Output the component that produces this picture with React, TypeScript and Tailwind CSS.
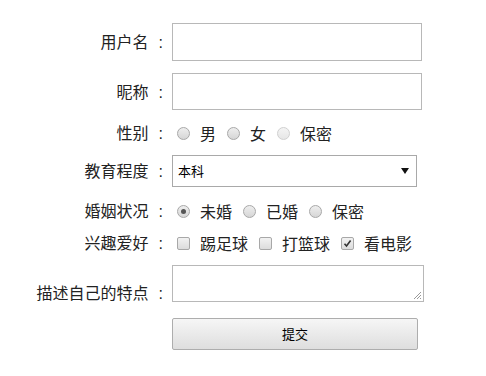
import React from "react";

const font = { fontFamily: '"Microsoft YaHei", "Noto Sans CJK SC", "Noto Sans", sans-serif' };

function Label({ text, className = "" }: { text: string; className?: string }) {
  return (
    <div className={"w-[163px] shrink-0 text-right text-[16px] leading-[22px] text-[#222] whitespace-nowrap " + className}>
      {text}
      <span className="ml-[10px]" style={{ fontFamily: '"Liberation Sans", sans-serif' }}>:</span>
    </div>
  );
}

function Radio({ checked = false, light = false }: { checked?: boolean; light?: boolean }) {
  return (
    <span
      className={
        "relative inline-flex h-[13px] w-[13px] shrink-0 items-center justify-center rounded-full border " +
        (light
          ? "border-[#d0d0d0] bg-gradient-to-b from-[#f4f4f4] to-[#e6e6e6]"
          : "border-[#a8a8a8] bg-gradient-to-b from-[#eeeeee] to-[#d6d6d6]")
      }
    >
      {checked && <span className="h-[5px] w-[5px] rounded-full bg-[#555]" />}
    </span>
  );
}

function Check({ checked = false }: { checked?: boolean }) {
  return (
    <span className="inline-flex h-[13px] w-[13px] shrink-0 items-center justify-center rounded-[2px] border border-[#a8a8a8] bg-gradient-to-b from-[#f2f2f2] to-[#dcdcdc]">
      {checked && (
        <svg width="9" height="9" viewBox="0 0 9 9">
          <path d="M1.5 4.8 L3.5 7 L7.6 1.6" fill="none" stroke="#333" strokeWidth="1.6" />
        </svg>
      )}
    </span>
  );
}

function Option({ control, text, first = false }: { control: React.ReactNode; text: string; first?: boolean }) {
  return (
    <div className={"flex items-center " + (first ? "ml-[5px]" : "ml-[11px]")}>
      {control}
      <span className="ml-[10px] text-[16px] leading-[22px] text-[#222]">{text}</span>
    </div>
  );
}

export default function App() {
  return (
    <div className="h-[376px] w-[486px] bg-white pt-[23px]" style={font}>
      <div className="flex items-center">
        <Label text="用户名" />
        <div className="ml-[9px] h-[38px] w-[250px] border border-[#b8b8b8] bg-white" />
      </div>
      <div className="mt-[12px] flex items-center">
        <Label text="昵称" />
        <div className="ml-[9px] h-[37px] w-[250px] border border-[#b8b8b8] bg-white" />
      </div>
      <div className="mt-[11px] flex h-[24px] items-center">
        <Label text="性别" />
        <div className="ml-[9px] flex items-center">
          <Option first control={<Radio />} text="男" />
          <Option control={<Radio />} text="女" />
          <Option control={<Radio light />} text="保密" />
        </div>
      </div>
      <div className="mt-[10px] flex items-center">
        <Label text="教育程度" />
        <div className="ml-[9px] flex h-[32px] w-[245px] items-center justify-between border border-[#a9a9a9] bg-white pl-[5px] pr-[7px]">
          <span className="text-[13px] text-black">本科</span>
          <svg width="8" height="6" viewBox="0 0 8 6">
            <path d="M0 0 H8 L4 6 Z" fill="#111" />
          </svg>
        </div>
      </div>
      <div className="mt-[12px] flex h-[24px] items-center">
        <Label text="婚姻状况" />
        <div className="ml-[9px] flex items-center">
          <Option first control={<Radio checked />} text="未婚" />
          <Option control={<Radio />} text="已婚" />
          <Option control={<Radio />} text="保密" />
        </div>
      </div>
      <div className="mt-[8px] flex h-[24px] items-center">
        <Label text="兴趣爱好" />
        <div className="ml-[9px] flex items-center">
          <Option first control={<Check />} text="踢足球" />
          <Option control={<Check />} text="打篮球" />
          <Option control={<Check checked />} text="看电影" />
        </div>
      </div>
      <div className="mt-[10px] flex items-end">
        <Label text="描述自己的特点" className="-mb-[3px]" />
        <div className="relative ml-[9px] h-[37px] w-[252px] border border-[#b8b8b8] bg-white">
          <svg className="absolute bottom-[1px] right-[1px]" width="10" height="10" viewBox="0 0 10 10">
            <path d="M9 2 L2 9 M9 5 L5 9 M9 8 L8 9" stroke="#999" strokeWidth="1" />
          </svg>
        </div>
      </div>
      <div className="mt-[16px] flex items-center">
        <div className="w-[163px] shrink-0" />
        <div className="ml-[9px] flex h-[32px] w-[246px] items-center justify-center rounded-[2px] border border-[#adadad] bg-gradient-to-b from-[#f6f6f6] to-[#dedede] text-[13px] text-black">
          提交
        </div>
      </div>
    </div>
  );
}
